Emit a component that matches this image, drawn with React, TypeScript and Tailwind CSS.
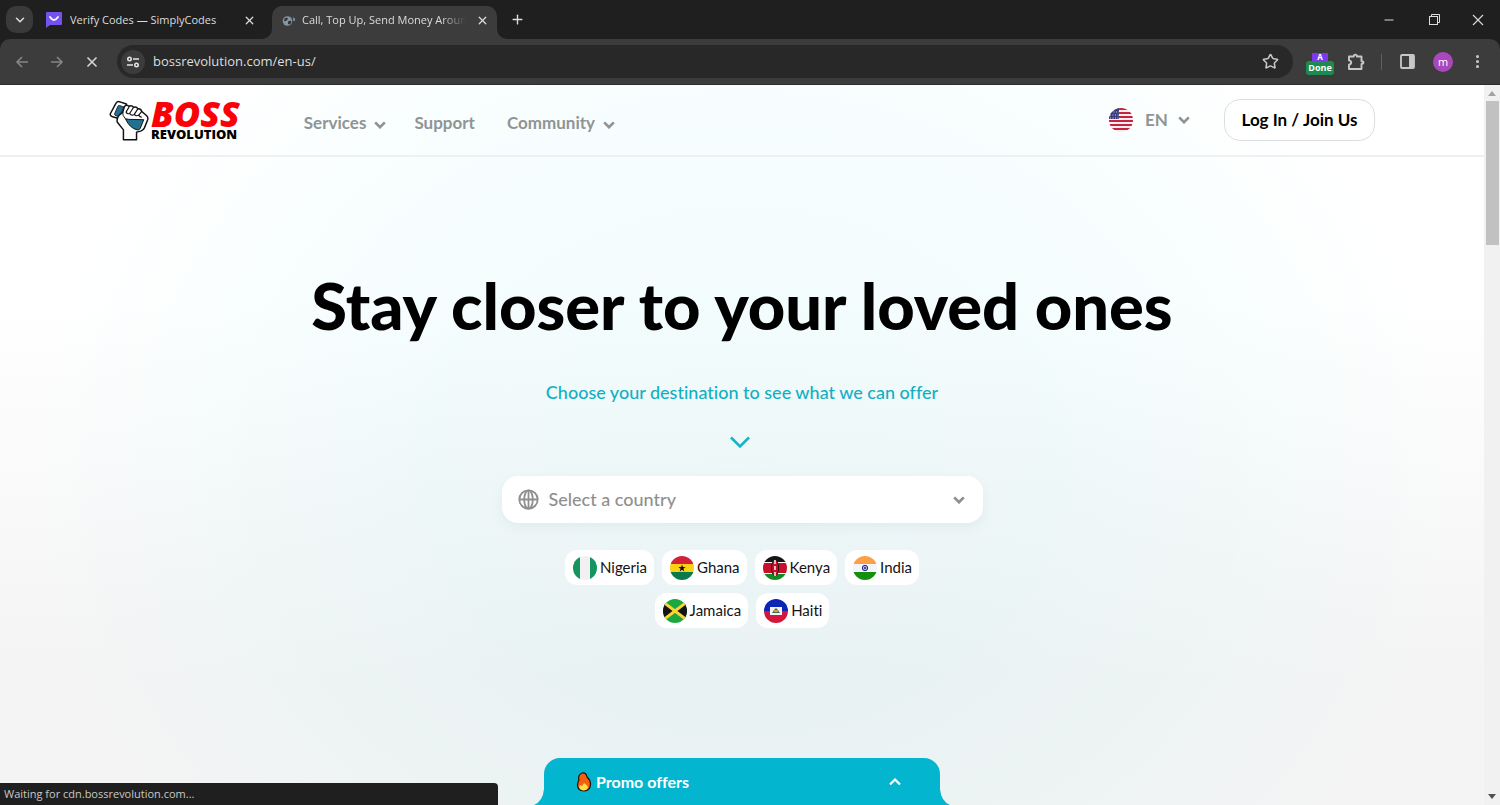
import type { ReactNode } from "react";
import { ChevronDown, Minus, MoreVertical, Plus, Star, X } from "lucide-react";

const countries = [
  { name: "Nigeria", code: "ng" },
  { name: "Ghana", code: "gh" },
  { name: "Kenya", code: "ke" },
  { name: "India", code: "in" },
  { name: "Jamaica", code: "jm" },
  { name: "Haiti", code: "ht" },
];

export default function App() {
  return (
    <div className="flex h-screen flex-col overflow-hidden bg-[#3c3c3c] font-['Open_Sans','Noto_Sans',sans-serif]">
      <TabStrip />
      <Toolbar />
      <div className="relative flex min-h-0 flex-1 border-t border-[#2c2c2c]">
        <div className="relative flex min-w-0 flex-1 flex-col overflow-hidden bg-[radial-gradient(ellipse_48%_82%_at_50%_54%,rgba(0,190,220,0.05)_0%,rgba(0,205,225,0.042)_45%,rgba(0,225,240,0.025)_75%,rgba(0,225,240,0)_100%),linear-gradient(#ffffff_30%,#f4f4f4_82%)] font-[Lato,sans-serif] [font-variant-ligatures:none]">
          <SiteHeader />
          <Hero />
          <PromoOffers />
        </div>
        <Scrollbar />
        <div className="absolute bottom-0 left-0 h-[22px] w-[498px] rounded-tr bg-[#1f1f1f] px-1 text-[11px] leading-[22px] text-[#c8c8c8]">
          Waiting for cdn.bossrevolution.com...
        </div>
      </div>
    </div>
  );
}

const TabStrip = () => (
  <div className="flex h-[39px] shrink-0 items-stretch bg-[#1f1f1f] text-[11px] text-[#dcdcdc]">
    <button
      aria-label="Search tabs"
      className="mt-1.5 ml-1.5 flex size-[27px] items-center justify-center rounded-[10px] bg-[#3a3a3a]"
    >
      <ChevronDown size={14} strokeWidth={2.6} />
    </button>
    <div className="flex w-[239px] items-center pt-px pr-4 pl-[13px]">
      <SimplyCodesIcon />
      <span className="ml-2 flex-1 truncate">Verify Codes — SimplyCodes</span>
      <button aria-label="Close tab">
        <X size={13} strokeWidth={2.4} />
      </button>
    </div>
    <div className="relative mt-1.5 flex w-[225px] items-center rounded-t-[10px] bg-[#3c3c3c] pr-2 pb-1 pl-2.5">
      <TabFlare className="absolute bottom-0 -left-2.5" />
      <TabFlare className="absolute -right-2.5 bottom-0 -scale-x-100" />
      <LoadingIcon />
      <span className="ml-1.5 flex-1 overflow-hidden mask-r-from-85% whitespace-nowrap">
        Call, Top Up, Send Money Around
      </span>
      <button aria-label="Close tab" className="ml-2.5">
        <X size={13} strokeWidth={2.4} />
      </button>
    </div>
    <button aria-label="New tab" className="ml-3 flex w-4 items-center justify-center">
      <Plus size={15} strokeWidth={2.2} />
    </button>
    <div className="ml-auto flex items-center gap-8 pr-4">
      <button aria-label="Minimize">
        <Minus size={14} strokeWidth={1.8} />
      </button>
      <button aria-label="Restore">
        <svg width="12" height="12" viewBox="0 0 12 12" fill="none" stroke="currentColor">
          <rect x="1.500" y="2.500" width="8" height="8" />
          <path d="M3.500 2.500v-2h8v8h-2" />
        </svg>
      </button>
      <button aria-label="Close">
        <svg width="12" height="12" viewBox="0 0 12 12" fill="none" stroke="currentColor" strokeWidth="1.1">
          <path d="M1 1l10 10M11 1L1 11" />
        </svg>
      </button>
    </div>
  </div>
);

const Toolbar = () => (
  <div className="shrink-0 bg-[#1f1f1f]">
    <div className="flex h-[45px] items-center rounded-t-[10px] bg-[#3c3c3c] px-3.5 text-[#c7c7c7]">
      <NavButton label="Back" className="text-[#858585]">
        <path d="M13 7H2M7 2L2 7l5 5" />
      </NavButton>
      <NavButton label="Forward" className="ml-[19px] text-[#858585]">
        <path d="M1 7h11M7 2l5 5-5 5" />
      </NavButton>
      <NavButton label="Stop" className="ml-[19px] text-[#d5d5d5]">
        <path d="M2.500 2.500l9 9M11.500 2.500l-9 9" />
      </NavButton>
      <div className="ml-[17px] flex h-[33px] flex-1 items-center rounded-full bg-[#282828] pr-3.5 pl-1">
        <button
          aria-label="View site information"
          className="flex size-6 items-center justify-center rounded-full bg-[#3c3c3c] text-[#e3e3e3]"
        >
          <svg width="14" height="14" viewBox="0 0 14 14" fill="none" stroke="currentColor" strokeWidth="1.6">
            <circle cx="3.500" cy="4" r="1.700" />
            <circle cx="10.500" cy="10" r="1.700" />
            <path d="M7 4h6M1 10h6" />
          </svg>
        </button>
        <input
          aria-label="Address"
          defaultValue="bossrevolution.com/en-us/"
          className="ml-2 min-w-0 flex-1 bg-transparent text-[13px] text-[#dedede] outline-none"
        />
        <button aria-label="Bookmark this tab">
          <Star size={17} strokeWidth={2.2} />
        </button>
      </div>
      <button aria-label="Verify extension" className="ml-[13px] flex w-7 flex-col items-center pt-1">
        <span className="w-4 bg-[#7c3aed] text-center text-[8px] leading-2 font-bold text-white">A</span>
        <span className="w-7 rounded-[3px] bg-[#1d8a4e] text-center text-[9px] leading-3.5 font-bold text-white">
          Done
        </span>
      </button>
      <button aria-label="Extensions" className="ml-[13px]">
        <svg width="18" height="18" viewBox="0 0 18 18" fill="none" stroke="currentColor" strokeWidth="1.9">
          <path
            d="M2 3.500h4.700q0-1.900 1.600-1.900t1.600 1.900h4.600v4.700q1.900 0 1.900 1.400t-1.900 1.400v5H2v-4.200q2.200-.4 2.200-2.200T2 7.400z"
            strokeLinejoin="round"
          />
        </svg>
      </button>
      <div className="ml-4 h-4 w-px bg-[#606060]" />
      <button aria-label="Side panel" className="ml-[18px]">
        <svg width="15" height="15" viewBox="0 0 15 15">
          <rect x="1" y="1" width="13" height="13" rx="1" fill="none" stroke="currentColor" strokeWidth="1.8" />
          <path d="M9 1h5v13H9z" fill="currentColor" />
        </svg>
      </button>
      <button
        aria-label="Profile"
        className="ml-[18px] flex size-5 items-center justify-center rounded-full bg-[#ab47bc] text-[11px] leading-none text-white"
      >
        m
      </button>
      <button aria-label="Menu" className="ml-4">
        <MoreVertical size={17} strokeWidth={2.4} />
      </button>
    </div>
  </div>
);

const NavButton = ({ label, className, children }: { label: string; className: string; children: ReactNode }) => (
  <button aria-label={label} className={`flex size-4 items-center justify-center ${className}`}>
    <svg width="14" height="14" viewBox="0 0 14 14" fill="none" stroke="currentColor" strokeWidth="1.6">
      {children}
    </svg>
  </button>
);

const SiteHeader = () => (
  <header className="flex h-[72px] shrink-0 items-center border-b-2 border-[#edf1f1] px-[109px]">
    <a href="#home" aria-label="Boss Revolution" className="flex items-center gap-0.5">
      <FistLogo />
      <span className="flex flex-col font-['Open_Sans',sans-serif] font-extrabold">
        <span className="text-[36px] leading-7 text-[#fb0007] italic">BOSS</span>
        <span className="text-[13px] leading-3 text-black">REVOLUTION</span>
      </span>
    </a>
    <nav className="ml-16 flex items-center gap-7 pt-1.5 text-[17px] font-bold text-[#8f9494]">
      <button className="flex items-center gap-2">
        Services <Caret className="mt-1" />
      </button>
      <a href="#support" className="mr-1">
        Support
      </a>
      <button className="flex items-center gap-2">
        Community <Caret className="mt-1" />
      </button>
    </nav>
    <div className="ml-auto flex items-center text-[#8f9494]">
      <Flag code="us" />
      <label className="ml-3 flex items-center gap-2.5">
        <select aria-label="Language" className="appearance-none bg-transparent text-[17px] font-bold outline-none">
          <option>EN</option>
        </select>
        <Caret />
      </label>
      <button className="ml-[34px] h-[42px] w-[151px] rounded-2xl border border-[#dcdfdf] bg-white text-[17px] font-bold text-black">
        Log In / Join Us
      </button>
    </div>
  </header>
);

const Hero = () => (
  <main className="flex flex-col items-center pt-[108px]">
    <h1 className="text-[65px] leading-[80px] font-black text-black">Stay closer to your loved ones</h1>
    <label htmlFor="destination" className="mt-[33px] text-[18px] leading-7 font-medium text-[#12afc3]">
      Choose your destination to see what we can offer
    </label>
    <svg width="24" height="24" viewBox="0 0 24 24" className="mt-6" fill="none" stroke="#12b5cb" strokeWidth="2.600">
      <path d="M1 7.500l9 9 9-9" />
    </svg>
    <div className="mt-[22px] flex h-[47px] w-[481px] items-center rounded-2xl bg-white pr-[18px] pl-4 text-[#8f8f8f] shadow-[0_4px_12px_rgba(60,110,120,0.08)]">
      <GlobeIcon />
      <select id="destination" className="ml-2.5 flex-1 appearance-none bg-transparent text-[18px] font-medium outline-none">
        <option>Select a country</option>
      </select>
      <Caret />
    </div>
    <div className="mt-[27px] flex max-w-[400px] flex-wrap justify-center gap-2">
      {countries.map((c) => (
        <button
          key={c.code}
          className="flex h-[35px] items-center gap-[3px] rounded-xl bg-white pr-[7px] pl-2 text-[15px] text-[#141414]"
        >
          <Flag code={c.code} />
          {c.name}
        </button>
      ))}
    </div>
  </main>
);

const PromoOffers = () => (
  <button className="absolute bottom-0 left-1/2 flex h-[47px] w-[396px] -translate-x-1/2 items-center rounded-t-2xl bg-[#03b5cf] pr-[38px] pl-8 text-[16px] font-bold text-white">
    <svg width="10" height="16" viewBox="0 0 10 16" className="absolute bottom-0 -left-2.5">
      <path d="M10 0Q9 12 0 16h10z" fill="#03b5cf" />
    </svg>
    <svg width="10" height="16" viewBox="0 0 10 16" className="absolute -right-2.5 bottom-0">
      <path d="M0 0Q1 12 10 16H0z" fill="#03b5cf" />
    </svg>
    <FlameIcon />
    <span className="ml-1 flex-1 text-left">Promo offers</span>
    <svg width="14" height="10" viewBox="0 0 14 10" fill="none" stroke="currentColor" strokeWidth="2.200">
      <path d="M2 7.500l5-5 5 5" />
    </svg>
  </button>
);

const Scrollbar = () => (
  <div className="flex w-4 shrink-0 flex-col items-center bg-[#f1f1f1] py-1.5">
    <svg width="8" height="5" viewBox="0 0 8 5">
      <path d="M0 5l4-5 4 5z" fill="#a3a3a3" />
    </svg>
    <div className="mt-[5px] h-36 w-[13px] bg-[#c1c1c1]" />
    <svg width="8" height="5" viewBox="0 0 8 5" className="mt-auto">
      <path d="M0 0l4 5 4-5z" fill="#505050" />
    </svg>
  </div>
);

const Caret = ({ className = "" }: { className?: string }) => (
  <svg
    width="12"
    height="8"
    viewBox="0 0 12 8"
    fill="none"
    stroke="currentColor"
    strokeWidth="2.700"
    className={`shrink-0 ${className}`}
  >
    <path d="M1.200 1.400L6 6.200l4.800-4.800" />
  </svg>
);

const TabFlare = ({ className }: { className: string }) => (
  <svg width="10" height="10" viewBox="0 0 10 10" className={className}>
    <path d="M10 0a10 10 0 01-10 10h10z" fill="#3c3c3c" />
  </svg>
);

const SimplyCodesIcon = () => (
  <svg width="16" height="16" viewBox="0 0 16 16">
    <path d="M1 0h14a1 1 0 011 1v11a1 1 0 01-1 1H4l-4 3V1a1 1 0 011-1z" fill="#7352f0" />
    <path d="M4 5q4 6 8 0" fill="none" stroke="#fff" strokeWidth="1.800" strokeLinecap="round" />
  </svg>
);

const LoadingIcon = () => (
  <svg width="14" height="14" viewBox="0 0 14 14">
    <circle cx="5.500" cy="7" r="4.800" fill="#8494a0" />
    <path d="M2.500 4.500l2.500-1 1 1.500-2 2-2 0zM6 7.500l2.500-1 1 1.500-1.500 2.500-2-.5z" fill="#30363a" />
    <path d="M11.500 3q2 1.500 1 4h-1z" fill="#8ec5ee" />
  </svg>
);

const GlobeIcon = () => (
  <svg width="21" height="21" viewBox="0 0 21 21" fill="none" stroke="currentColor" strokeWidth="1.800">
    <circle cx="10.500" cy="10.500" r="9.200" />
    <ellipse cx="10.500" cy="10.500" rx="4.300" ry="9.200" />
    <path d="M1.500 10.500h18M10.500 1.500v18" />
  </svg>
);

const FlameIcon = () => (
  <svg width="16" height="20" viewBox="0 0 16 20" stroke="#1c1208" strokeWidth="1.200">
    <path d="M3 8Q1.500 3 6 1q4-1 5 4 3.500 3 3.500 7 0 6.500-6.500 7-6.500-.5-6.500-6Q1.500 10 3 8z" fill="#f4600e" />
    <path d="M4 13l2 1 2-3q4 2.500 4 5-1 2.400-4 2.400-3.500 0-5-3z" fill="#ffdc4a" stroke="none" />
  </svg>
);

const FistLogo = () => (
  <svg width="40" height="41" viewBox="54 46 122 125" stroke="#111" strokeWidth="4.500" strokeLinejoin="round" fill="#fff">
    {/* phone */}
    <path d="M58 88l17-32q4-6 10-5l22 7-18 46-24-7q-9-3-7-9z" />
    <path d="M71 88l10-23q1-3 5-2l13 4-12 31-14-5q-3-2-2-5z" fill="#24718f" strokeWidth="2.500" />
    {/* hand */}
    <path d="M101 66q6-7 14-1 8-4 14 3 9-3 13 5 9-1 12 8l15 13q5 5 3 12l-10 25q-3 7-11 10l-13 3v23H98v-30L79 113q-2-11 6-21l11-9z" />
    <path d="M104 103l10 2 46 1-11 27q-3 6-9 4-23-5-36-34z" fill="#24718f" strokeWidth="3" />
    {/* fingers */}
    <path d="M116 66l-10 17q4 7 11 4l12-19M117 87q5 8 14 3l11-17M131 90q6 7 14 2l9-11M145 93q4 6 9 5" fill="none" strokeWidth="3.500" />
    <path d="M96 83q-2 10 8 20" fill="none" strokeWidth="3" />
  </svg>
);

const Flag = ({ code }: { code: string }) => (
  <svg width="24" height="24" viewBox="0 0 24 24" className="shrink-0 rounded-full">
    {flags[code]}
  </svg>
);

const flags: Record<string, ReactNode> = {
  ng: (
    <>
      <path d="M0 0h24v24H0z" fill="#f1f1f1" />
      <path d="M0 0h7v24H0zM17 0h7v24h-7z" fill="#15945f" />
    </>
  ),
  gh: (
    <>
      <path d="M0 0h24v8H0z" fill="#d5203a" />
      <path d="M0 8h24v8H0z" fill="#fbd116" />
      <path d="M0 16h24v8H0z" fill="#0b7a4b" />
      <path d="M12 8.500l.9 2.600h2.700l-2.200 1.600.9 2.700-2.300-1.700-2.300 1.700.9-2.700-2.200-1.600h2.700z" fill="#111" />
    </>
  ),
  ke: (
    <>
      <path d="M0 0h24v24H0z" fill="#fff" />
      <path d="M0 0h24v6H0z" fill="#151515" />
      <path d="M0 7h24v10H0z" fill="#c8102e" />
      <path d="M0 18h24v6H0z" fill="#118a22" />
      <ellipse cx="12" cy="12" rx="4" ry="8" fill="#111" />
      <ellipse cx="12" cy="12" rx="3" ry="8" fill="#c8102e" />
      <path d="M12 4v4M12 10v4M12 16v4" stroke="#fff" strokeWidth="1.400" />
    </>
  ),
  in: (
    <>
      <path d="M0 0h24v24H0z" fill="#f4f5f8" />
      <path d="M0 0h24v8H0z" fill="#ff9f45" />
      <path d="M0 16h24v8H0z" fill="#14900e" />
      <circle cx="12" cy="12" r="2.700" fill="#b8b8dc" stroke="#24248c" />
      <circle cx="12" cy="12" r="1" fill="#24248c" />
    </>
  ),
  jm: (
    <>
      <path d="M0 0h24v24H0z" fill="#1aa83f" />
      <path d="M0 3l12 9-12 9zM24 3l-12 9 12 9z" fill="#151515" />
      <path d="M0 3l24 18M24 3L0 21" stroke="#fcd535" strokeWidth="3" />
    </>
  ),
  ht: (
    <>
      <path d="M0 0h24v12H0z" fill="#0b25b4" />
      <path d="M0 12h24v12H0z" fill="#d5163c" />
      <path d="M6 8h12v8H6z" fill="#f2f2f2" />
      <path d="M8 14l2-3 2-2 2 2 2 3z" fill="#456b52" />
      <path d="M10 11h4v2h-4z" fill="#c9a43a" />
    </>
  ),
  us: (
    <>
      <path d="M0 0h24v24H0z" fill="#f6eef0" />
      <path d="M0 1h24M0 5h24M0 9h24M0 13h24M0 17h24M0 21h24" stroke="#c5243e" strokeWidth="2" />
      <path d="M0 0h10v11H0z" fill="#3a3c7c" />
      <path d="M2 4h8M1 7h9M1 10h9" stroke="#c9c9e4" strokeDasharray="1 1.500" />
    </>
  ),
};
